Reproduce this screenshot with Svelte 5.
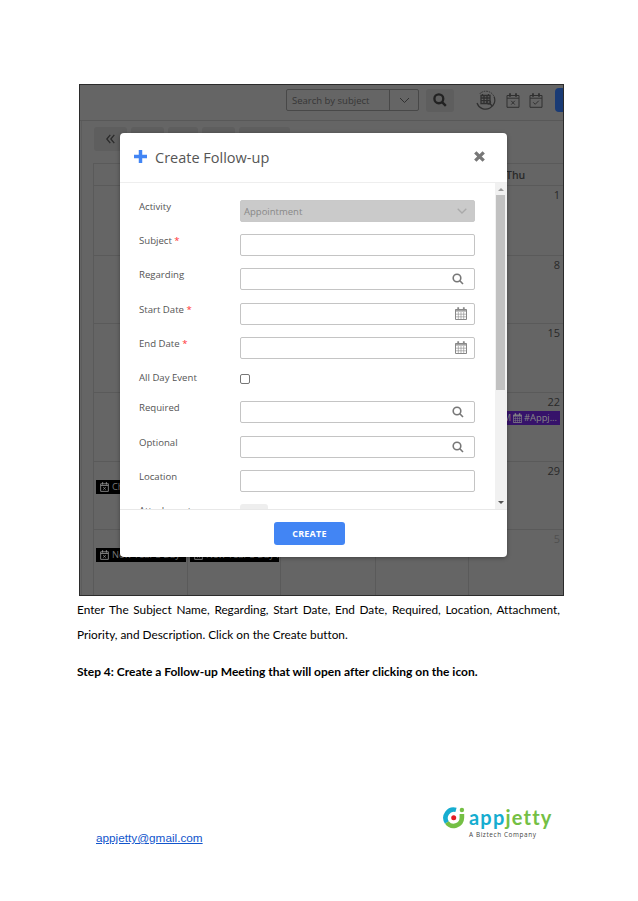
<script>
  const weeks = [
    { day: '1' },
    { day: '8' },
    { day: '15' },
    { day: '22', meeting: '#Appj...' },
    { day: '29', events: ['Christmas'] },
    { day: '5', muted: true, events: ['New Year 3 Day', 'New Year 3 Day ...'] }
  ];

  const fields = [
    { label: 'Activity', type: 'select', value: 'Appointment' },
    { label: 'Subject', type: 'text', required: true },
    { label: 'Regarding', type: 'text', icon: 'search' },
    { label: 'Start Date', type: 'text', icon: 'calendar', required: true },
    { label: 'End Date', type: 'text', icon: 'calendar', required: true },
    { label: 'All Day Event', type: 'checkbox' },
    { label: 'Required', type: 'text', icon: 'search' },
    { label: 'Optional', type: 'text', icon: 'search' },
    { label: 'Location', type: 'text' },
    { label: 'Attachment', type: 'file' }
  ];

  let allDay = $state(false);
</script>

{#snippet search()}
  <svg class="icon search" viewBox="0 0 12 12">
    <circle cx="5" cy="5" r="3.8" /><path d="M7.8 7.8 11 11" />
  </svg>
{/snippet}

{#snippet calendar()}
  <svg class="icon calendar" viewBox="0 0 12 13">
    <path d="M.5 2.5h11v10H.5z" /><path d="M.5 3h11M.5 4h11" />
    <path class="thin" d="M3.3 5v7M6 5v7M8.7 5v7M1 7.2h10M1 9.8h10" />
    <path d="M3.2.3v3M8.8.3v3" stroke-width="1.8" />
  </svg>
{/snippet}

{#snippet dayIcon(mark)}
  <svg class="icon day" viewBox="0 0 14 15">
    <path d="M1 2.5h12v11.8H1zM1 5.2h12" />
    <path d="M4 .3v3.4M10 .3v3.4" stroke-width="1.8" />
    {#if mark === 'check'}
      <path d="m4.2 9.3 2 2 3.6-3.6" />
    {:else}
      <path d="m5.2 7.8 3.6 3.8m0-3.8-3.6 3.8" />
    {/if}
  </svg>
{/snippet}

<main>
  <section class="shot">
    <header class="bar">
      <div class="combo">
        <span>Search by subject</span>
        <i><svg width="11" height="7" viewBox="0 0 11 7"><path d="m1 1 4.5 4.5L10 1" /></svg></i>
      </div>
      <div class="find">{@render search()}</div>
      <svg class="sync" viewBox="0 0 20 20">
        <path d="M3.5 4A8.8 8.8 0 0 1 18 6.5" stroke-dasharray="1.5 1" />
        <path d="M18 6.5A8.8 8.8 0 0 1 14 18M1 13A9 9 0 0 0 14 18" stroke-width="1.2" />
        <path d="M5 5.5h9v8H5zM5 8h9M5 10.7h9M8 5.5v8M11 5.5v8M6.5 4v2M12.5 4v2" stroke-width="1.3" />
        <circle cx="12.7" cy="12.2" r="2" /><path d="m14 13.7 2 2" stroke-width="1.5" />
      </svg>
      {@render dayIcon('cross')}
      {@render dayIcon('check')}
      <div class="more"></div>
    </header>

    <div class="content">
      <nav>
        <b><svg width="9" height="10" viewBox="0 0 9 10"><path d="M4.3.8.8 5l3.5 4.2M8.3.8 4.8 5l3.5 4.2" /></svg></b>
        <b></b><b></b><b></b><b></b>
      </nav>
      <div class="grid">
        <div class="cell"></div>
        <div class="cell"></div>
        <div class="cell"></div>
        <div class="cell"></div>
        <div class="cell thu">Thu</div>
        {#each weeks as week}
          {#each [0, 1, 2, 3, 4] as col}
            <div class="cell">
              {#if col === 4}
                <span class="num" class:muted={week.muted}>{week.day}</span>
                {#if week.meeting}
                  <span class="meeting">03:30 PM {@render calendar()} {week.meeting}</span>
                {/if}
              {:else if week.events?.[col]}
                <span class="event">{@render dayIcon('cross')}{week.events[col]}</span>
              {/if}
            </div>
          {/each}
        {/each}
      </div>
    </div>

    <div class="modal">
      <div class="head">
        <svg width="13" height="13" viewBox="0 0 12 12"><path d="M6 0v12M0 6h12" /></svg>
        <h1>Create Follow-up</h1>
        <svg class="close" width="11" height="11" viewBox="0 0 11 11"><path d="m1.3 1.3 8.4 8.4m0-8.4L1.3 9.7" /></svg>
      </div>
      <div class="body">
        <form>
          {#each fields as field}
            <div class="row {field.type}">
              <span class="label">{field.label}{#if field.required}<em>&nbsp;*</em>{/if}</span>
              {#if field.type === 'checkbox'}
                <input type="checkbox" aria-label={field.label} bind:checked={allDay} />
              {:else if field.type === 'file'}
                <div class="upload"></div>
              {:else}
                <div class="field">
                  {field.value ?? ''}
                  {#if field.type === 'select'}
                    <svg class="chevron" width="10" height="6" viewBox="0 0 10 6"><path d="m.7.7 4.3 4.3L9.3.7" /></svg>
                  {:else if field.icon === 'search'}
                    {@render search()}
                  {:else if field.icon === 'calendar'}
                    {@render calendar()}
                  {/if}
                </div>
              {/if}
            </div>
          {/each}
        </form>
        <div class="scroll">
          <svg width="6" height="3" viewBox="0 0 6 3"><path fill="#999" d="M0 3 3 0l3 3z" /></svg>
          <div class="thumb"></div>
          <svg class="down" width="6" height="3" viewBox="0 0 6 3"><path fill="#555" d="m0 0 3 3 3-3z" /></svg>
        </div>
      </div>
      <div class="foot"><button>CREATE</button></div>
    </div>
  </section>

  <article>
    <p class="wide">Enter The Subject Name, Regarding, Start Date, End Date, Required, Location, Attachment,</p>
    <p class="rest">Priority, and Description. Click on the Create button.</p>
    <h2>Step 4: Create a Follow-up Meeting that will open after clicking on the icon.</h2>
  </article>

  <footer>
    <a href="mailto:appjetty@gmail.com">appjetty@gmail.com</a>
    <div class="logo">
      <svg width="22" height="22" viewBox="0 0 22 22">
        <path d="M13 2.9A8.3 8.3 0 0 0 3.9 15.5" stroke="#16add0" />
        <path d="M3.9 15.5A8.3 8.3 0 0 0 18.9 10.8V7" stroke="#74bf44" />
        <circle cx="18.9" cy="3" r="2.2" fill="#74bf44" />
        <circle cx="10.7" cy="10.8" r="2.5" fill="#e31b23" />
      </svg>
      <div>
        <strong>app<span>jetty</span></strong>
        <small>A Biztech Company</small>
      </div>
    </div>
  </footer>
</main>

<style>
  :global(body) { margin: 0; background: #fff; }
  main {
    box-sizing: border-box;
    width: 638px;
    height: 901px;
    padding: 84px 0 0 79px;
    overflow: hidden;
  }
  svg { fill: none; flex: none; }

  .shot {
    position: relative;
    box-sizing: border-box;
    width: 485px;
    height: 512px;
    border: 1px solid #2b2b2b;
    background: #656565;
    overflow: hidden;
    font-family: 'Open Sans', sans-serif;
    color: #292929;
  }
  .bar {
    display: flex;
    align-items: center;
    box-sizing: border-box;
    height: 36px;
    padding: 0 0 5px 206px;
    border-bottom: 1px solid #585858;
  }
  .bar svg { stroke: #303030; }
  .combo {
    display: flex;
    flex: none;
    box-sizing: border-box;
    width: 133px;
    height: 22px;
    border: 1px solid #484848;
    border-radius: 2px;
    font-size: 9.5px;
    line-height: 21px;
    color: #363636;
  }
  .combo span { width: 98px; padding-left: 5px; border-right: 1px solid #484848; }
  .combo i { display: grid; place-items: center; width: 28px; }
  .find {
    display: grid;
    flex: none;
    place-items: center;
    width: 28px;
    height: 23px;
    margin-left: 7px;
    border-radius: 3px;
    background: #5e5e5e;
  }
  .find :global(.search) { width: 14px; height: 14px; stroke: #222; stroke-width: 2; }
  .sync { width: 20px; height: 20px; margin-left: 22px; }
  .bar .day { width: 14px; height: 15px; margin-left: 9px; }
  .sync + .day { margin-left: 10px; }
  .more { width: 20px; height: 24px; margin-left: 12px; border-radius: 4px 0 0 4px; background: #1a3b75; flex: none; }

  .content { height: 474px; margin-left: 1px; padding: 6px 0 0 12px; border-left: 1px solid #5c5c5c; }
  nav { display: flex; gap: 4px; height: 24px; margin-bottom: 12px; }
  nav b { display: grid; place-items: center; width: 33px; border-radius: 3px; background: #5e5e5e; }
  nav b:nth-child(3) { width: 30px; }
  nav b:last-child { width: 51px; }
  nav svg { stroke: #292929; stroke-width: 1.2; }
  .grid {
    display: grid;
    grid-template-columns: 94px 93px 95px 93px 95px;
    grid-template-rows: 22px 69.7px repeat(4, 68.7px) 70px;
    border-left: 1px solid #5a5a5a;
    border-top: 1px solid #5a5a5a;
    margin-left: -1px;
  }
  .cell {
    display: flex;
    flex-direction: column;
    min-width: 0;
    border-right: 1px solid #5a5a5a;
    border-bottom: 1px solid #5a5a5a;
  }
  .thu { padding-left: 37px; font-size: 10.5px; font-weight: 600; line-height: 22px; }
  .num { padding-right: 3px; font-size: 11px; line-height: 17px; text-align: right; }
  .muted { color: #505050; }
  .meeting, .event {
    display: flex;
    align-items: center;
    height: 14px;
    overflow: hidden;
    background: #000;
    color: #777;
    font-size: 9.3px;
    line-height: 14px;
    white-space: nowrap;
  }
  .meeting { justify-content: flex-end; gap: 2px; margin: 1px 3px 0 2px; padding-right: 3px; background: #36126a; color: #888; }
  .meeting :global(.calendar) { width: 9px; height: 10px; stroke: #888; }
  .event { margin: 18px 1px 0 2px; padding-left: 4px; gap: 3px; }
  .event :global(.day) { width: 9px; height: 10px; stroke: #888; stroke-width: 1.4; }

  .modal {
    position: absolute;
    left: 40px;
    top: 48px;
    display: flex;
    flex-direction: column;
    width: 387px;
    height: 424px;
    border-radius: 4px;
    background: #fff;
    box-shadow: 0 1px 4px rgba(0, 0, 0, .35);
    color: #555;
  }
  .head {
    display: flex;
    align-items: center;
    box-sizing: border-box;
    height: 50px;
    padding: 0 22px 2px 14px;
    border-bottom: 1px solid #eee;
  }
  .head svg { stroke: #4285f4; stroke-width: 3.2; }
  h1 { margin: 2px auto 0 8px; font-size: 14.5px; font-weight: 400; line-height: 20px; }
  .head .close { stroke: #777; stroke-width: 3.3; }
  .body { display: flex; justify-content: space-between; height: 326px; overflow: hidden; }
  form { padding: 17px 0 0 19px; }
  .row { display: flex; height: 34.2px; }
  .row.checkbox { height: 30.4px; }
  .label { width: 101px; font-size: 9.6px; line-height: 14px; }
  em { color: #f33; font-style: normal; }
  .field {
    display: flex;
    align-items: center;
    box-sizing: border-box;
    width: 235px;
    height: 22px;
    padding: 0 7px 0 3px;
    border: 1px solid #c4c4c4;
    border-radius: 2px;
    font-size: 9.5px;
  }
  .field > :global(svg) { margin-left: auto; }
  .select .field { border-color: #c9c9c9; background: #cacaca; color: #888; }
  .chevron { stroke: #aaa; stroke-width: 1.3; }
  .icon { flex: none; stroke: currentColor; }
  .field :global(.search) { width: 12px; height: 12px; margin-right: 3px; stroke: #777; stroke-width: 1.6; }
  .field :global(.calendar) { width: 12px; height: 13px; stroke: #888; }
  .thin { stroke-width: .6; }
  input {
    appearance: none;
    width: 10px;
    height: 10px;
    box-sizing: border-box;
    margin: 3px 0 0;
    border: 1px solid #767676;
    border-radius: 2px;
  }
  input:checked { background: #4285f4; }
  .upload { width: 28px; height: 22px; border-radius: 3px; background: #eee; }
  .scroll {
    display: flex;
    flex-direction: column;
    align-items: center;
    box-sizing: border-box;
    width: 12px;
    padding: 5px 1px 5px 0;
    background: #f1f1f1;
  }
  .thumb { width: 9px; height: 195px; margin-top: 4px; background: #c1c1c1; }
  .down { margin-top: auto; }
  .foot { display: flex; justify-content: center; flex: 1; border-top: 1px solid #e8e8e8; padding-right: 8px; }
  button {
    width: 71px;
    height: 23px;
    margin-top: 12px;
    padding: 0;
    border: 0;
    border-radius: 3px;
    background: #4285f4;
    color: #fff;
    font: 700 9px 'Open Sans', sans-serif;
    letter-spacing: .25px;
  }

  article {
    width: 483px;
    margin-left: -2px;
    padding-top: 1px;
    color: #000;
    font-family: Lato, sans-serif;
    font-variant-ligatures: none;
    white-space: nowrap;
  }
  p { margin: 0; font-size: 11.8px; line-height: 25px; }
  .wide { text-align: justify; text-align-last: justify; }
  h2 { margin: 12px 0 0; font-size: 12px; font-weight: 700; line-height: 25px; }

  footer { display: flex; align-items: flex-start; padding: 123px 0 0 17px; }
  a { width: 347px; margin-top: 23px; font: 11.75px/16px 'Liberation Sans', sans-serif; color: #15c; text-decoration: underline; }
  .logo { display: flex; }
  .logo svg { stroke-width: 4.6; }
  .logo div { display: flex; flex-direction: column; padding-left: 4px; }
  strong {
    height: 24px;
    font: 700 20px/20px Lato, sans-serif;
    font-variant-ligatures: none;
    letter-spacing: 1.2px;
    color: #16add0;
  }
  strong span { color: #74bf44; }
  small { font: 6.4px/8px 'Open Sans', sans-serif; letter-spacing: .6px; color: #444; }
</style>
